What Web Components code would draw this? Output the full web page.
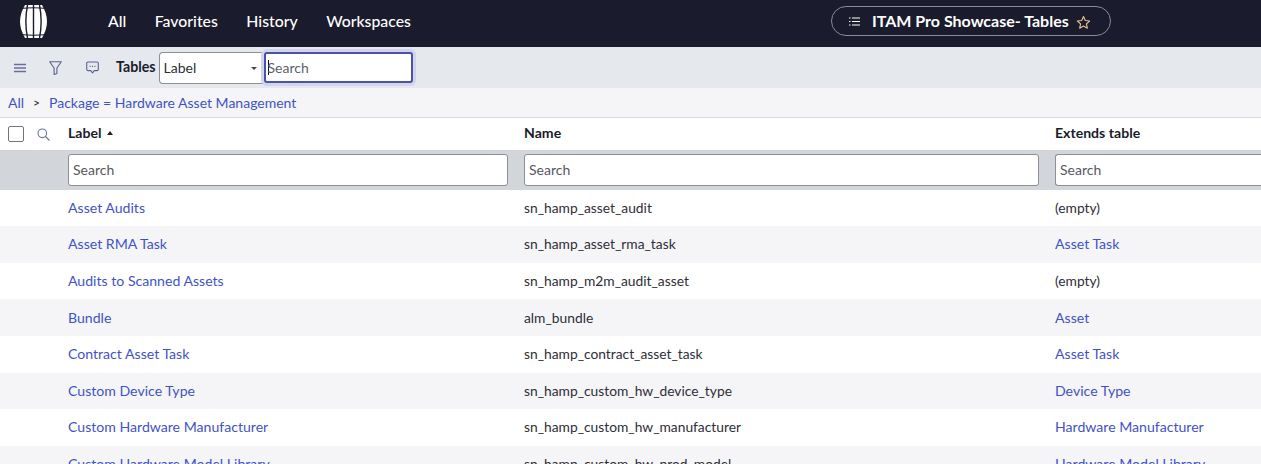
<!DOCTYPE html>
<html>
<head>
<meta charset="utf-8">
<title>Tables</title>
<style>
  html, body { margin: 0; height: 464px; overflow: hidden; background: #fff; }
  body { font-family: Lato, "Open Sans", sans-serif; font-size: 14px; color: #1a1b2b; }
</style>
</head>
<body>
<nav-bar></nav-bar>
<list-toolbar></list-toolbar>
<bread-crumbs></bread-crumbs>
<list-head></list-head>
<list-search></list-search>
<list-row label="Asset Audits" name="sn_hamp_asset_audit"></list-row>
<list-row alt label="Asset RMA Task" name="sn_hamp_asset_rma_task" ext="Asset Task"></list-row>
<list-row label="Audits to Scanned Assets" name="sn_hamp_m2m_audit_asset"></list-row>
<list-row alt label="Bundle" name="alm_bundle" ext="Asset"></list-row>
<list-row label="Contract Asset Task" name="sn_hamp_contract_asset_task" ext="Asset Task"></list-row>
<list-row alt label="Custom Device Type" name="sn_hamp_custom_hw_device_type" ext="Device Type"></list-row>
<list-row label="Custom Hardware Manufacturer" name="sn_hamp_custom_hw_manufacturer" ext="Hardware Manufacturer"></list-row>
<list-row alt label="Custom Hardware Model Library" name="sn_hamp_custom_hw_prod_model" ext="Hardware Model Library"></list-row>

<script>
const COLS = 'grid-template-columns: 68px 456px 531px 1fr;';

class NavBar extends HTMLElement {
  constructor() {
    super();
    this.attachShadow({ mode: 'open' }).innerHTML = `
      <style>
        :host { display: flex; align-items: center; height: 47px; background: #1a1b2c; color: #fff; }
        .logo { width: 27px; height: 33px; margin-left: 20px; margin-right: 61px; margin-top: -5px; flex: none; }
        a { font-size: 15.8px; font-weight: 500; margin-right: 28.500px; position: relative; top: -3px; }
        .pill { margin-left: auto; margin-right: 150px; width: 280px; height: 30px; box-sizing: border-box; border: 1px solid #8b8c97; border-radius: 15px;
          display: flex; align-items: center; padding-left: 17px; margin-top: -5px; flex: none; }
        .pill svg.l { width: 11px; height: 9px; margin-right: 12px; }
        .pill b { font-size: 16px; font-weight: 700; position: relative; top: -1px; }
        .pill svg.s { width: 15px; height: 15px; margin-left: 7px; margin-top: 2px; }
      </style>
      <svg class="logo" viewBox="0 0 27 33">
        <path fill="#fff" d="M5 0H22C25 5 27 11 27 16.500C27 22 25 28 22 33H5C2 28 0 22 0 16.500C0 11 2 5 5 0z"/>
        <path fill="none" stroke="#1a1b2c" stroke-width="1.400" d="M7.500 0C5.500 10 5.500 23 7.500 33M13.500 0V33M19.500 0C21.500 10 21.500 23 19.500 33"/>
        <path fill="none" stroke="#1a1b2c" stroke-width="1.200" d="M0 3.500Q13.500 2 27 3.500M0 29.500Q13.500 31 27 29.500"/>
      </svg>
      <a>All</a><a>Favorites</a><a>History</a><a>Workspaces</a>
      <div class="pill">
        <svg class="l" viewBox="0 0 11 9" stroke="#fff" fill="none" stroke-width="1"><path d="M0 1h1.500M3 1h8M0 4.500h1.500M3 4.500h8M0 8h1.500M3 8h8"/></svg>
        <b>ITAM Pro Showcase- Tables</b>
        <svg class="s" viewBox="0 0 24 24" fill="none" stroke="#e2c58c" stroke-width="1.800" stroke-linejoin="round"><path d="M12 2.500l2.900 6.300 6.900.8-5.100 4.700 1.400 6.800-6.100-3.400-6.100 3.400 1.400-6.800L2.200 9.600l6.900-.8z"/></svg>
      </div>
    `;
  }
}

class ListToolbar extends HTMLElement {
  constructor() {
    super();
    this.attachShadow({ mode: 'open' }).innerHTML = `
      <style>
        :host { display: flex; align-items: center; height: 41px; background: #e5e9ee; position: relative; }
        svg { flex: none; }
        .menu { width: 12px; height: 10px; margin-left: 14px; margin-right: 23px; }
        .filter { width: 13px; height: 14px; margin-right: 24px; }
        .chat { width: 13px; height: 13px; margin-right: 17px; }
        b { font-size: 14.2px; font-weight: 700; margin-right: 3px; position: relative; top: -1px; }
        .sel { width: 110px; height: 32px; box-sizing: border-box; background: #fff; border: 1px solid #8c8f9a; border-right: none;
          border-radius: 4px 0 0 4px; display: flex; align-items: center; padding: 0 0 1px 4px; font-size: 14px; color: #2e2e38; position: relative; }
        .sel::after { content: ""; position: absolute; right: 12px; top: 14px; border: 3px solid transparent; border-top: 3px solid #444; }
        .inp { width: 149px; height: 31px; box-sizing: border-box; background: #fff; border: 2px solid #4b52a8; border-radius: 3px;
          box-shadow: 0 0 0 3px #d0d4ec; display: flex; align-items: center; padding-left: 2px; font-size: 14px; color: #5d5f6b; margin-left: -5px; position: relative; }
        .inp i { width: 1px; height: 15px; background: #111; margin-right: -1px; }
      </style>
      <svg class="menu" viewBox="0 0 12 10" stroke="#6b6e96" stroke-width="1.500"><path d="M0 1.500h12M0 5h12M0 8.500h12"/></svg>
      <svg class="filter" viewBox="0 0 13 14" fill="none" stroke="#5d6092" stroke-width="1.100" stroke-linejoin="round"><path d="M.7.8h11.600L7.900 7v5.500l-2.800 1V7z"/></svg>
      <svg class="chat" viewBox="0 0 13 13" fill="none" stroke="#5d6092" stroke-width="1.100" stroke-linejoin="round"><path d="M2 1h9a1.300 1.300 0 0 1 1.300 1.300v6A1.300 1.300 0 0 1 11 9.600H8.200L6.500 12 4.800 9.600H2A1.300 1.300 0 0 1 .7 8.300v-6A1.300 1.300 0 0 1 2 1z"/><path d="M3.600 5.300h1M6 5.300h1M8.400 5.300h1" stroke-width="1.300"/></svg>
      <b>Tables</b>
      <div class="sel">Label</div>
      <div class="inp"><i></i>Search</div>
    `;
  }
}

class BreadCrumbs extends HTMLElement {
  constructor() {
    super();
    this.attachShadow({ mode: 'open' }).innerHTML = `
      <style>
        :host { display: flex; align-items: center; height: 29px; background: #f5f5f8; border-bottom: 1px solid #d8dade; padding-left: 8px; font-size: 14px; color: #3f53c8; }
        span { color: #1a1b2b; margin: 0 9px 0 9px; font-size: 12px; }
      </style>
      <a>All</a><span>&gt;</span><a>Package = Hardware Asset Management</a>
    `;
  }
}

class ListHead extends HTMLElement {
  constructor() {
    super();
    this.attachShadow({ mode: 'open' }).innerHTML = `
      <style>
        :host { display: grid; ${COLS} align-items: center; height: 32px; background: #fff; font-weight: 700; font-size: 14.1px; }
        .tools { display: flex; align-items: center; height: 100%; padding-left: 8px; }
        .box { width: 14px; height: 14px; border: 1px solid #70727f; border-radius: 2px; background: #fff; flex: none; }
        svg { width: 13px; height: 13px; margin-left: 13px; }
        .t { position: relative; top: -2px; }
        .sort { display: inline-block; border: 3px solid transparent; border-bottom: 4px solid #222; border-top: none; margin-left: 5px; vertical-align: 3px; }
      </style>
      <div class="tools"><div class="box"></div>
        <svg viewBox="0 0 13 13" fill="none" stroke="#6a70b4" stroke-width="1.100"><circle cx="5.300" cy="5.300" r="4.300"/><path d="M8.500 8.500l4 4"/></svg>
      </div>
      <div class="t">Label<span class="sort"></span></div><div class="t">Name</div><div class="t">Extends table</div>
    `;
  }
}

class ListSearch extends HTMLElement {
  constructor() {
    super();
    this.attachShadow({ mode: 'open' }).innerHTML = `
      <style>
        :host { display: grid; ${COLS} align-items: start; height: 39.600px; background: #d2d6db; }
        .c { padding-top: 4px; padding-right: 16px; }
        .c:last-child { padding-right: 0; }
        .f { height: 32px; box-sizing: border-box; background: #fff; border: 1px solid #8c8f9a; border-radius: 3px; display: flex; align-items: center; padding: 0 0 2px 4px; font-size: 14px; color: #565863; }
        .c:last-child .f { border-right: none; border-radius: 3px 0 0 3px; }
      </style>
      <div></div>
      <div class="c"><div class="f">Search</div></div>
      <div class="c"><div class="f">Search</div></div>
      <div class="c"><div class="f">Search</div></div>
    `;
  }
}

class ListRow extends HTMLElement {
  connectedCallback() {
    const ext = this.getAttribute('ext');
    this.attachShadow({ mode: 'open' }).innerHTML = `
      <style>
        :host { display: grid; ${COLS} align-items: center; height: 36.600px; background: #fff; font-size: 14.1px; color: #2e2e38; white-space: nowrap; }
        :host([alt]) { background: #f5f5f7; }
        div { position: relative; top: -.5px; }
        a { color: #3f53c8; }
        .n { font-size: 13.8px; }
      </style>
      <div></div>
      <div><a>${this.getAttribute('label')}</a></div>
      <div class="n">${this.getAttribute('name')}</div>
      <div class="${ext ? '' : 'n'}">${ext ? `<a>${ext}</a>` : '(empty)'}</div>
    `;
  }
}

customElements.define('nav-bar', NavBar);
customElements.define('list-toolbar', ListToolbar);
customElements.define('bread-crumbs', BreadCrumbs);
customElements.define('list-head', ListHead);
customElements.define('list-search', ListSearch);
customElements.define('list-row', ListRow);
</script>
</body>
</html>
